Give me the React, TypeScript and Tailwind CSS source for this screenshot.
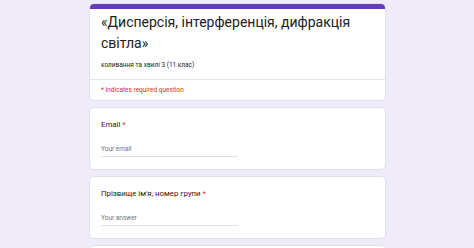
import React from 'react';

const Question = ({ label, placeholder }: { label: string; placeholder: string }) => (
  <div className="bg-white rounded-[5px] border border-[#e3dfea] px-[11px] pt-[11px] h-[63px]">
    <div className="text-[7.8px] text-[#202124] leading-[12px]">
      {label} <span className="text-[#d93025]">*</span>
    </div>
    <div className="mt-[13px] w-[137px] border-b border-[#e0e0e0] pb-[2px] text-[6.5px] text-[#70757a] leading-[10px]">
      {placeholder}
    </div>
  </div>
);

const App = () => {
  return (
    <div
      className="w-[474px] h-[248px] overflow-hidden bg-[#f0ebf8]"
      style={{ fontFamily: 'Roboto, "Noto Sans", sans-serif' }}
    >
      <div className="w-[297px] ml-[89px] pt-[3px] flex flex-col gap-[6px]">
        <div className="bg-white rounded-[5px] border border-[#e3dfea] overflow-hidden">
          <div className="h-[5px] bg-[#673ab7]" />
          <div className="px-[11px] pt-[3px] pb-[9px] border-b border-[#e6e6e6]">
            <div className="text-[14px] leading-[21px] text-[#202124]">
              «Дисперсія, інтерференція, дифракція світла»
            </div>
            <div className="mt-[6px] text-[6.5px] leading-[10px] text-[#202124]">
              коливання та хвилі 3 (11 клас)
            </div>
          </div>
          <div className="px-[11px] py-[5px] text-[6.5px] leading-[10px] text-[#d93025]">
            * Indicates required question
          </div>
        </div>
        <Question label="Email" placeholder="Your email" />
        <Question label="Прізвище ім'я, номер групи" placeholder="Your answer" />
        <div className="bg-white rounded-[5px] border border-[#e3dfea] h-[40px]" />
      </div>
    </div>
  );
};

export default App;
